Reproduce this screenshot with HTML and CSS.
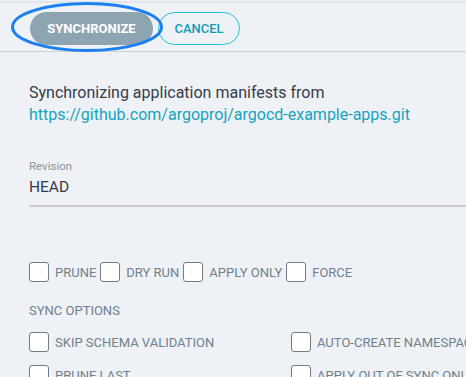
FILE: index.html
```html
<!DOCTYPE html>
<html>
<head>
<meta charset="utf-8">
<link rel="stylesheet" href="styles.css">
</head>
<body>
<div class="panel">
  <div class="header">
    <button class="btn btn-sync">SYNCHRONIZE</button>
    <button class="btn btn-cancel">CANCEL</button>
    <svg class="ring" width="156" height="52" viewBox="0 0 156 52"><ellipse cx="77" cy="26" rx="74.5" ry="23.5" fill="none" stroke="#1c7ff0" stroke-width="3"/></svg>
  </div>
  <div class="body">
    <p class="intro">Synchronizing application manifests from<br><a class="link">https://github.com/argoproj/argocd-example-apps.git</a></p>
    <div class="field">
      <div class="field-label">Revision</div>
      <div class="field-value">HEAD</div>
    </div>
    <div class="opts">
      <label class="check"><span class="box"></span><span class="lbl">PRUNE</span></label>
      <label class="check"><span class="box"></span><span class="lbl">DRY RUN</span></label>
      <label class="check"><span class="box"></span><span class="lbl">APPLY ONLY</span></label>
      <label class="check"><span class="box"></span><span class="lbl">FORCE</span></label>
    </div>
    <div class="section-title">SYNC OPTIONS</div>
    <div class="grid">
      <label class="check"><span class="box"></span><span class="lbl">SKIP SCHEMA VALIDATION</span></label>
      <label class="check"><span class="box"></span><span class="lbl">AUTO-CREATE NAMESPACE</span></label>
      <label class="check"><span class="box"></span><span class="lbl">PRUNE LAST</span></label>
      <label class="check"><span class="box"></span><span class="lbl">APPLY OUT OF SYNC ONLY</span></label>
    </div>
  </div>
</div>
</body>
</html>
```
FILE: styles.css
```css
html, body {
  margin: 0;
  padding: 0;
  background: #eef2f6;
  overflow: hidden;
}
body {
  font-family: Roboto, "Liberation Sans", sans-serif;
  width: 466px;
  height: 377px;
}
.panel {
  border-top: 2px solid #e2e6ea;
  margin-top: 1px;
  width: 700px;
}
.header {
  position: relative;
  display: flex;
  align-items: center;
  gap: 5px;
  height: 48px;
  padding-left: 30px;
  border-bottom: 1px solid #c9d3d9;
}
.btn {
  height: 33px;
  margin-top: 2px;
  border-radius: 17px;
  font-family: Roboto, "Liberation Sans", sans-serif;
  font-weight: 700;
  font-size: 13px;
  padding: 0;
  cursor: pointer;
}
.btn-sync {
  width: 123px;
  background: #8fa4b1;
  color: #ffffff;
  border: none;
}
.btn-cancel {
  width: 82px;
  background: transparent;
  color: #139db5;
  border: 1px solid #1fc3d9;
  font-weight: 500;
}
.ring {
  position: absolute;
  left: 10px;
  top: -2px;
}
.body {
  padding: 0 0 0 29px;
}
.intro {
  margin: 30px 0 0;
  font-size: 16px;
  line-height: 22px;
  color: #363c4a;
}
.link {
  color: #17a3bd;
}
.field {
  margin-top: 33px;
  border-bottom: 2px solid #cccccc;
  padding-bottom: 8px;
}
.field-label {
  font-size: 11.5px;
  color: #8b9299;
  line-height: 14px;
}
.field-value {
  font-size: 15.5px;
  color: #363c4a;
  line-height: 20px;
  margin-top: 4px;
}
.opts {
  display: flex;
  gap: 4px;
  margin-top: 55px;
}
.check {
  display: flex;
  align-items: center;
  gap: 6px;
  height: 20px;
}
.box {
  width: 18px;
  height: 18px;
  border: 1px solid #707b84;
  border-radius: 3px;
  background: #ffffff;
}
.lbl {
  font-size: 13px;
  color: #6f808c;
}
.section-title {
  margin-top: 21px;
  font-size: 13px;
  color: #6f808c;
  line-height: 16px;
}
.grid {
  display: grid;
  grid-template-columns: 262px 262px;
  row-gap: 13px;
  margin-top: 13px;
}
```
